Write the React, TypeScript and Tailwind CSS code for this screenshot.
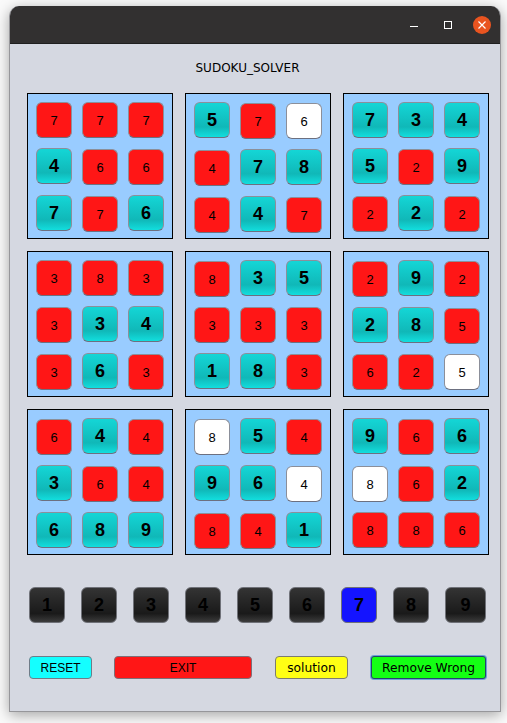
const BOXES = [
  ['7r', '7r', '7r', '4t', '6r', '6r', '7t', '7r', '6t'],
  ['5t', '7r', '6w', '4r', '7t', '8t', '4r', '4t', '7r'],
  ['7t', '3t', '4t', '5t', '2r', '9t', '2r', '2t', '2r'],
  ['3r', '8r', '3r', '3r', '3t', '4t', '3r', '6t', '3r'],
  ['8r', '3t', '5t', '3r', '3r', '3r', '1t', '8t', '3r'],
  ['2r', '9t', '2r', '2t', '8t', '5r', '6r', '2r', '5w'],
  ['6r', '4t', '4r', '3t', '6r', '4r', '6t', '8t', '9t'],
  ['8w', '5t', '4r', '9t', '6t', '4w', '8r', '4r', '1t'],
  ['9t', '6r', '6t', '8w', '6r', '2t', '8r', '8r', '6r'],
];

const CELL = {
  t: 'bg-gradient-to-b from-[#14d6d6] via-[#10b8b8] via-70% to-[#12dede] text-[18px] font-bold',
  r: 'bg-[#ff1616] pt-px text-[13px]',
  w: 'bg-white pt-px text-[13px]',
};

const DIGITS = [1, 2, 3, 4, 5, 6, 7, 8, 9];

function Cell({ value, offset }: { value: string; offset: boolean }) {
  const kind = value[1] as 't' | 'r' | 'w';
  return (
    <div
      className={`flex h-9 w-9 items-center justify-center rounded-[6px] border border-[#8b8f9a] border-b-[#6c7080] text-black ${CELL[kind]} ${
        offset && kind !== 't' ? 'mt-px' : ''
      }`}
    >
      {value[0]}
    </div>
  );
}

function Box({ cells }: { cells: string[] }) {
  const rows = [cells.slice(0, 3), cells.slice(3, 6), cells.slice(6, 9)];
  return (
    <div className="flex h-[146px] w-[146px] flex-col gap-2.5 border border-black bg-[#99ccff] pl-2 pt-2">
      {rows.map((row, i) => {
        const bold = row.filter((c) => c[1] === 't').length;
        const mixed = bold > 0 && bold < 3;
        return (
          <div key={i} className="flex items-start gap-2.5">
            {row.map((c, j) => (
              <Cell key={j} value={c} offset={mixed} />
            ))}
          </div>
        );
      })}
    </div>
  );
}

export default function App() {
  return (
    <div className="h-[723px] w-[507px] bg-[#fafafa] pl-[9px] pt-1.5 font-['Liberation_Sans',sans-serif]">
      <div className="flex h-[706px] w-[492px] flex-col overflow-hidden rounded-t-[10px] border-x border-b border-[#96969a] bg-[#d5d8e1] shadow-[0_3px_14px_rgba(0,0,0,0.35)]">
        {/* title bar */}
        <div className="flex h-[38px] shrink-0 items-center justify-end border-b border-[#1f1f1f] bg-[#323030]">
          <div className="mr-[26px] mt-[4px] h-px w-2 bg-white" />
          <div className="mr-[21px] h-2 w-2 border border-white" />
          <div className="mr-[9px] flex h-[18px] w-[18px] items-center justify-center rounded-full bg-[#e95420]">
            <svg viewBox="0 0 10 10" className="h-2.5 w-2.5" stroke="white" strokeWidth="1.2">
              <path d="M1.5 1.5 8.5 8.5M8.5 1.5 1.5 8.5" />
            </svg>
          </div>
        </div>

        <div className="mt-[17px] pr-[15px] text-center font-['DejaVu_Sans',sans-serif] text-xs leading-[15px] text-black">
          SUDOKU_SOLVER
        </div>

        <div className="ml-[17px] mt-[17px] grid w-[462px] grid-cols-[146px_146px_146px] gap-3">
          {BOXES.map((cells, i) => (
            <Box key={i} cells={cells} />
          ))}
        </div>

        {/* digit picker */}
        <div className="ml-[19px] mt-[32px] flex gap-4">
          {DIGITS.map((d) => (
            <div
              key={d}
              className={`flex h-9 items-center justify-center rounded-[6px] border border-[#6f7178] text-[18px] font-bold text-black ${
                d === 9 ? 'w-[41px]' : 'w-9'
              } ${d === 7 ? 'bg-[#1414ff]' : 'bg-gradient-to-b from-[#343434] via-[#1a1a1a] via-75% to-[#3c3c3c]'}`}
            >
              {d}
            </div>
          ))}
        </div>

        <div className="ml-[19px] mt-[33px] flex items-start text-xs text-black">
          <div className="flex h-[23px] w-[63px] items-center justify-center rounded-[4px] border border-[#6f7c88] bg-[#14ffff] pt-px">
            RESET
          </div>
          <div className="ml-[22px] flex h-[23px] w-[138px] items-center justify-center rounded-[4px] border border-[#7c6f78] bg-[#ff1616] pt-px">
            EXIT
          </div>
          <div className="ml-[23px] flex h-[23px] w-[73px] items-center justify-center rounded-[4px] border border-[#7c7c70] bg-[#ffff14] pt-[2px] font-['DejaVu_Sans',sans-serif] text-[12.25px]">
            solution
          </div>
          <div className="ml-[23px] flex h-[23px] w-[115px] items-center justify-center rounded-[3px] border border-[#24456b] bg-[#14ff14] pt-[2px] font-['DejaVu_Sans',sans-serif] text-[12.25px] shadow-[0_0_0_1px_#6f9fd8]">
            Remove Wrong
          </div>
        </div>
      </div>
    </div>
  );
}
